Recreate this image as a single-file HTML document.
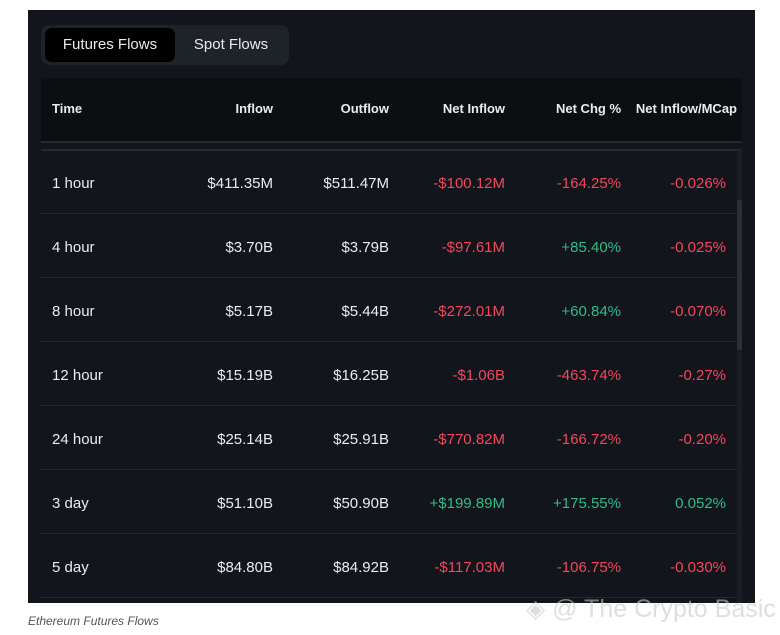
<!DOCTYPE html><html><head><style>
body{margin:0;width:780px;height:635px;background:#fff;font-family:"Liberation Sans",sans-serif;position:relative;overflow:hidden}
.p{position:absolute;left:28px;top:10px;width:727px;height:593px;background:#12151c}
.tabs{position:absolute;left:13px;top:15px;width:248px;height:40px;background:#1e2229;border-radius:8px}
.t{position:absolute;top:3px;height:34px;line-height:34px;font-size:15px;color:#eaecef;text-align:center}
.hd{position:absolute;left:13px;top:68px;width:701px;height:63px;background:#0c0e12}
.c{position:absolute;font-size:15px;color:#eaecef;white-space:nowrap}
.h{font-size:13px;font-weight:bold;top:101px}
.r{color:#f6465d}.g{color:#2ebd85}
.ln{position:absolute;left:13px;width:701px;height:2px;background:#252930}
</style></head><body>
<div class="p">
<div class="tabs"><div class="t" style="left:4px;width:130px;background:#000;border-radius:7px">Futures Flows</div><div class="t" style="left:136px;width:108px">Spot Flows</div></div>
<div class="hd"></div>
<div class="ln" style="top:131px"></div><div class="ln" style="top:139px"></div>
<div style="position:absolute;left:709px;top:140px;width:5px;height:453px;background:#1a1d23"></div>
<div style="position:absolute;left:709px;top:190px;width:5px;height:150px;background:#2b2f36"></div>
</div>
<div id="t"></div>
<div style="position:absolute;left:28px;top:614px;font-size:12px;font-style:italic;color:#555">Ethereum Futures Flows</div>
<div style="position:absolute;left:526px;top:594px;font-size:25px;white-space:nowrap;color:rgba(200,200,200,.6)">◈ @ The Crypto Basic</div>
<script>
const rows=[["1 hour","$411.35M","$511.47M","-$100.12M","-164.25%","-0.026%"],["4 hour","$3.70B","$3.79B","-$97.61M","+85.40%","-0.025%"],["8 hour","$5.17B","$5.44B","-$272.01M","+60.84%","-0.070%"],["12 hour","$15.19B","$16.25B","-$1.06B","-463.74%","-0.27%"],["24 hour","$25.14B","$25.91B","-$770.82M","-166.72%","-0.20%"],["3 day","$51.10B","$50.90B","+$199.89M","+175.55%","0.052%"],["5 day","$84.80B","$84.92B","-$117.03M","-106.75%","-0.030%"]];
const R=[null,273,389,505,621,726];
let h='<div class="c h" style="left:52px">Time</div>';
["","Inflow","Outflow","Net Inflow","Net Chg %","Net Inflow/MCap"].forEach((s,i)=>{if(i)h+=`<div class="c h" style="right:${780-(i==5?737:R[i])}px">${s}</div>`});
rows.forEach((r,j)=>{const y=175+64*j;h+=`<div class="c" style="left:52px;top:${y}px">${r[0]}</div>`;
for(let i=1;i<6;i++){let cl=i>=3?(r[i][0]=='-'?'r':'g'):'';h+=`<div class="c ${cl}" style="right:${780-R[i]}px;top:${y}px">${r[i]}</div>`}
h+=`<div style="position:absolute;left:41px;width:696px;height:1px;background:#252930;top:${213+64*j}px"></div>`});
document.getElementById('t').innerHTML=h;
</script>
</body></html>
